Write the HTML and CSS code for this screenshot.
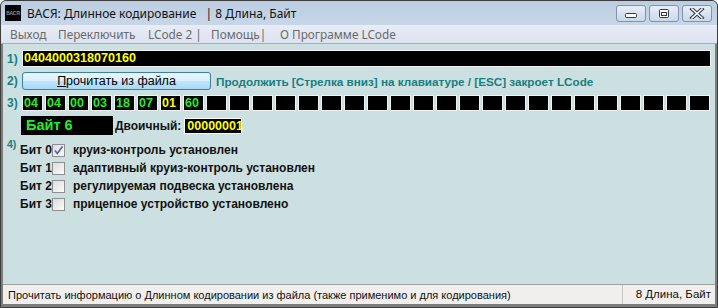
FILE: index.html
```html
<!DOCTYPE html>
<html lang="ru">
<head>
<meta charset="utf-8">
<title>ВАСЯ: Длинное кодирование</title>
<link rel="stylesheet" href="styles.css">
</head>
<body>
<div class="win">
  <div class="titlebar">
    <div class="appicon">ВАСЯ</div>
    <div class="title">ВАСЯ: Длинное кодирование &nbsp;&nbsp;| 8 Длина, Байт</div>
    <div class="wbtns">
      <div class="wbtn">
        <svg width="14" height="10" viewBox="0 0 14 10"><rect x="1.5" y="4.5" width="11" height="4" rx="1" fill="#fff" stroke="#2d3a4a"/></svg>
      </div>
      <div class="wbtn">
        <svg width="14" height="10" viewBox="0 0 14 10"><rect x="2.5" y="0.5" width="9" height="8" rx="1" fill="#fff" stroke="#2d3a4a"/><rect x="4.5" y="3.5" width="5" height="3" fill="#fff" stroke="#2d3a4a"/></svg>
      </div>
      <div class="wbtn">
        <svg width="16" height="11" viewBox="0 0 16 11"><path d="M3 1 L13 10 M13 1 L3 10" stroke="#2d3a4a" stroke-width="3.6" stroke-linecap="square"/><path d="M3 1 L13 10 M13 1 L3 10" stroke="#fff" stroke-width="1.6" stroke-linecap="square"/></svg>
      </div>
    </div>
  </div>
  <div class="menubar">
    <span class="mi mi-exit">Выход</span>
    <span class="mi mi-switch">Переключить</span>
    <span class="mi mi-lcode">LCode 2 |</span>
    <span class="mi mi-help">Помощь|</span>
    <span class="mi">О Программе LCode</span>
  </div>
  <div class="client">
    <div class="row row-code">
      <span class="num">1)</span>
      <div class="codebox">0404000318070160</div>
    </div>
    <div class="row row-read">
      <span class="num">2)</span>
      <div class="btn"><u>П</u>рочитать из файла</div>
      <span class="hint">Продолжить [Стрелка вниз] на клавиатуре / [ESC] закроет LCode</span>
    </div>
    <div class="row row-bytes">
      <span class="num">3)</span>
      <div class="bytes">
        <span class="cell">04</span><span class="cell">04</span><span class="cell">00</span><span class="cell">03</span><span class="cell">18</span><span class="cell">07</span><span class="cell sel">01</span><span class="cell">60</span>
        <span class="cell"></span><span class="cell"></span><span class="cell"></span><span class="cell"></span><span class="cell"></span><span class="cell"></span><span class="cell"></span><span class="cell"></span><span class="cell"></span><span class="cell"></span><span class="cell"></span><span class="cell"></span><span class="cell"></span><span class="cell"></span><span class="cell"></span><span class="cell"></span><span class="cell"></span><span class="cell"></span><span class="cell"></span><span class="cell"></span><span class="cell"></span><span class="cell"></span>
      </div>
    </div>
    <div class="row row-byte">
      <div class="bytebox">Байт 6</div>
      <span class="binlabel">Двоичный:</span>
      <div class="binbox">00000001</div>
    </div>
    <div class="bits">
      <span class="num num-small">4)</span>
      <div class="bitlist">
        <div class="bit">
          <span class="bname">Бит 0</span>
          <span class="cb"><svg width="11" height="11" viewBox="0 0 11 11"><path d="M2 5.5 L4.3 8.5 L9.5 1.5" fill="none" stroke="#4a62b0" stroke-width="1.6"/></svg></span>
          <span class="blabel">круиз-контроль установлен</span>
        </div>
        <div class="bit">
          <span class="bname">Бит 1</span>
          <span class="cb"></span>
          <span class="blabel">адаптивный круиз-контроль установлен</span>
        </div>
        <div class="bit">
          <span class="bname">Бит 2</span>
          <span class="cb"></span>
          <span class="blabel">регулируемая подвеска установлена</span>
        </div>
        <div class="bit">
          <span class="bname">Бит 3</span>
          <span class="cb"></span>
          <span class="blabel">прицепное устройство установлено</span>
        </div>
      </div>
    </div>
  </div>
  <div class="status">
    <div class="st-main">Прочитать информацию о Длинном кодировании из файла (также применимо и для кодирования)</div>
    <div class="st-side">8 Длина, Байт</div>
  </div>
</div>
</body>
</html>
```
FILE: styles.css
```css
* { box-sizing: border-box; }
html, body { margin: 0; padding: 0; }
body {
  width: 718px;
  height: 308px;
  overflow: hidden;
  background: #ffffff;
  font-family: "Liberation Sans", Arial, sans-serif;
}
.win {
  width: 718px;
  height: 308px;
  border: 1px solid #3c3c3c;
  border-radius: 6px 6px 0 0;
  background: #7d7d7d;
  display: flex;
  flex-direction: column;
  overflow: hidden;
}
.titlebar {
  height: 24px;
  flex: none;
  display: flex;
  align-items: center;
  background: linear-gradient(#bccde1, #c8d7e8);
  padding-left: 4px;
}
.appicon {
  width: 16px;
  height: 16px;
  background: #050505;
  color: #8a8a8a;
  font-size: 5px;
  line-height: 16px;
  text-align: center;
  letter-spacing: -0.2px;
  font-weight: bold;
}
.title {
  margin-left: 6px;
  font-family: "Noto Sans", "Open Sans", sans-serif;
  font-size: 12px;
  color: #111;
  flex: 1;
  white-space: nowrap;
}
.wbtns {
  display: flex;
  gap: 3px;
  margin-right: 5px;
  align-self: flex-start;
  margin-top: 4px;
}
.wbtn {
  width: 30px;
  height: 17px;
  border: 1px solid #7f93ae;
  border-radius: 3px;
  background: linear-gradient(#e7eef7, #cbd8e8);
  display: flex;
  align-items: center;
  justify-content: center;
}
.menubar {
  height: 19px;
  flex: none;
  display: flex;
  align-items: center;
  padding-left: 9px;
  background: linear-gradient(#e8ecf6, #dde2f0);
  border-bottom: 1px solid #a7adb8;
  font-family: "Noto Sans", "Open Sans", sans-serif;
  font-size: 11.8px;
  color: #6a6a6a;
  white-space: nowrap;
}
.mi-exit { width: 48px; }
.mi-switch { width: 90px; }
.mi-lcode { width: 63px; }
.mi-help { width: 69px; }
.client {
  flex: none;
  height: 240px;
  margin: 0 2px;
  background: #cde0e1;
  padding-top: 6px;
  padding-left: 4px;
}
.row {
  display: flex;
  align-items: center;
}
.num {
  width: 15px;
  flex: none;
  color: #1a7f80;
  font-weight: bold;
  font-size: 12px;
}
.row-code { height: 17px; }
.codebox {
  width: 689px;
  height: 17px;
  background: #000;
  border: 1px solid #eef2f2;
  color: #ffff00;
  font-weight: bold;
  font-size: 12.6px;
  line-height: 15px;
  padding-left: 1px;
}
.row-read { height: 18px; margin-top: 5px; }
.btn {
  width: 189px;
  height: 18px;
  border: 1px solid #3c7fb1;
  border-radius: 3px;
  background: linear-gradient(#eaf6fd 0%, #d9f0fc 50%, #bee6fd 51%, #a7d9f5 100%);
  font-size: 12.5px;
  line-height: 16px;
  text-align: center;
  color: #000;
}
.hint {
  margin-left: 5px;
  color: #167f80;
  font-weight: bold;
  font-size: 11.7px;
  white-space: nowrap;
}
.row-bytes { height: 16px; margin-top: 5px; }
.bytes {
  display: flex;
  gap: 2px;
}
.cell {
  width: 21px;
  height: 16px;
  background: #000;
  border: 1px solid #eef2f2;
  color: #22ee22;
  font-weight: bold;
  font-size: 12.5px;
  line-height: 14px;
  padding-left: 1px;
}
.cell.sel { color: #ffff00; }
.row-byte { height: 19px; margin-top: 5px; padding-left: 14px; }
.bytebox {
  width: 92px;
  height: 19px;
  background: #000;
  color: #22ee22;
  font-weight: bold;
  font-size: 14.5px;
  line-height: 19px;
  padding-left: 5px;
}
.binlabel {
  margin-left: 2px;
  font-weight: bold;
  font-size: 12px;
  color: #111;
}
.binbox {
  margin-left: 3px;
  width: 58px;
  height: 16px;
  background: #000;
  border: 1px solid #fafafa;
  color: #ffff00;
  font-weight: bold;
  font-size: 12.5px;
  line-height: 14px;
  padding-left: 2px;
}
.bits {
  display: flex;
  margin-top: 6px;
}
.num-small {
  width: 13px;
  font-size: 10.5px;
  line-height: 9px;
  margin-top: -1px;
}
.bitlist {
  display: flex;
  flex-direction: column;
}
.bit {
  height: 18px;
  display: flex;
  align-items: center;
  font-weight: bold;
  font-size: 12px;
  color: #111;
}
.bname { width: 32px; flex: none; }
.cb {
  width: 13px;
  height: 13px;
  border: 1px solid #8f8f8f;
  background: linear-gradient(135deg, #dcdcdc, #fbfbfb);
  display: flex;
  align-items: center;
  justify-content: center;
}
.blabel { margin-left: 8px; white-space: nowrap; }
.status {
  flex: none;
  height: 20px;
  margin: 0 2px 0 2px;
  background: #f0efed;
  border-top: 1px solid #a0a0a0;
  display: flex;
  align-items: center;
  font-size: 11px;
  color: #111;
  white-space: nowrap;
}
.st-main { flex: 1; padding-left: 5px; }
.st-side {
  width: 93px;
  height: 100%;
  border-left: 1px solid #c8c6c3;
  text-align: right;
  padding-right: 4px;
  line-height: 19px;
  font-size: 11.5px;
}
```
